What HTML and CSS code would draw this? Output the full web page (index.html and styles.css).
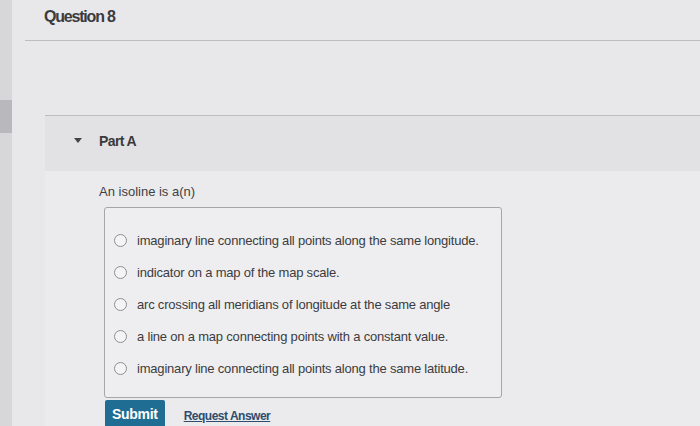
FILE: index.html
```html
<!DOCTYPE html>
<html>
<head>
<meta charset="utf-8">
<link rel="stylesheet" href="styles.css">
</head>
<body>
<div class="app">
  <div class="rail"><div class="rail-mark"></div></div>
  <div class="main">
    <h2 class="q-title">Question 8</h2>
    <div class="q-rule"></div>
    <div class="part">
      <div class="part-head">
        <span class="caret"></span>
        <span class="part-title">Part A</span>
      </div>
      <div class="part-body">
        <p class="prompt">An isoline is a(n)</p>
        <div class="options">
          <label class="opt"><span class="radio"></span><span>imaginary line connecting all points along the same longitude.</span></label>
          <label class="opt"><span class="radio"></span><span>indicator on a map of the map scale.</span></label>
          <label class="opt"><span class="radio"></span><span>arc crossing all meridians of longitude at the same angle</span></label>
          <label class="opt"><span class="radio"></span><span>a line on a map connecting points with a constant value.</span></label>
          <label class="opt"><span class="radio"></span><span>imaginary line connecting all points along the same latitude.</span></label>
        </div>
        <div class="actions">
          <button class="btn-submit">Submit</button>
          <a class="link-request" href="#">Request Answer</a>
        </div>
      </div>
    </div>
  </div>
</div>
</body>
</html>
```

FILE: styles.css
```css
html, body {
  margin: 0;
  padding: 0;
  height: 100%;
  overflow: hidden;
}
body {
  background: #e8e8ea;
  font-family: "Liberation Sans", Arial, sans-serif;
  color: #3a3a3c;
}
.app {
  display: flex;
  height: 426px;
  overflow: hidden;
}
.rail {
  width: 12px;
  flex: none;
  background: #d7d7da;
  padding-top: 100px;
  box-sizing: border-box;
}
.rail-mark {
  height: 33px;
  background: #b9b9bd;
}
.main {
  flex: 1;
  padding-left: 13px;
}
.q-title {
  margin: 0;
  padding: 8px 0 0 19px;
  font-size: 16px;
  font-weight: bold;
  letter-spacing: -1.2px;
  color: #3b3b3e;
  height: 29px;
}
.q-rule {
  height: 1px;
  background: #bdbdc0;
  margin-top: 3px;
}
.part {
  margin-top: 74px;
  margin-left: 20px;
  border-top: 1px solid #bdbdc0;
}
.part-head {
  display: flex;
  align-items: center;
  height: 55px;
  box-sizing: border-box;
  padding-bottom: 6px;
  background: #e2e2e4;
  padding-left: 29px;
}
.caret {
  width: 0;
  height: 0;
  border-left: 4px solid transparent;
  border-right: 4px solid transparent;
  border-top: 5px solid #444;
  margin-right: 17px;
}
.part-title {
  font-size: 14px;
  font-weight: bold;
  letter-spacing: -0.6px;
  color: #3a3a3c;
}
.part-body {
  background: #ebebed;
  padding: 13px 0 0 54px;
  height: 260px;
}
.prompt {
  margin: 0;
  font-size: 13px;
  color: #404042;
}
.options {
  margin-top: 8px;
  margin-left: 5px;
  width: 398px;
  border: 1px solid #a6a6a8;
  border-radius: 3px;
  background: #eeeef0;
  padding: 23px 0 20px 9px;
  box-sizing: border-box;
  display: flex;
  flex-direction: column;
  gap: 14px;
}
.opt {
  display: flex;
  align-items: center;
  font-size: 13px;
  color: #3c3c3e;
  height: 18px;
  letter-spacing: -0.2px;
}
.radio {
  width: 11px;
  height: 11px;
  border: 1px solid #8e8e92;
  border-radius: 50%;
  background: #f4f4f6;
  margin-right: 10px;
  flex: none;
}
.actions {
  display: flex;
  align-items: center;
  margin-top: 2px;
  margin-left: 6px;
  gap: 19px;
}
.btn-submit {
  background: #1f6d93;
  color: #fff;
  border: none;
  font-family: "Liberation Sans", Arial, sans-serif;
  font-weight: bold;
  font-size: 14px;
  letter-spacing: -0.3px;
  padding: 6px 7px 9px;
  border-radius: 2px;
}
.link-request {
  color: #2f4c6e;
  font-weight: bold;
  font-size: 12px;
  text-decoration: underline;
  letter-spacing: -0.5px;
}
```
